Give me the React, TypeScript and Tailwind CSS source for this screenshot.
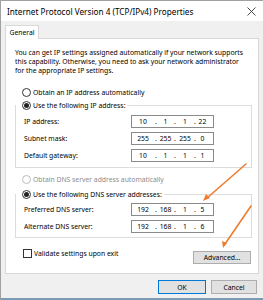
import React from "react";

const font = { fontFamily: '"Noto Sans", "Open Sans", sans-serif' };

function Radio({ checked, disabled }: { checked?: boolean; disabled?: boolean }) {
  return (
    <span
      className={`flex h-[9px] w-[9px] shrink-0 items-center justify-center rounded-full border bg-white ${
        disabled ? "border-[#bcbcbc]" : "border-[#333]"
      }`}
    >
      {checked && <span className="h-[5px] w-[5px] rounded-full bg-[#222]" />}
    </span>
  );
}

function IpField({ parts }: { parts: string[] }) {
  const widths = ["w-[20px]", "w-[13px]", "w-[14px]", "w-[9px]"];
  return (
    <div className="flex h-[13px] w-[83px] items-center border border-[#8a8a8a] bg-white pl-[1px] text-[6.8px] text-black">
      {parts.map((p, i) => (
        <React.Fragment key={i}>
          <span className={`${widths[i]} text-center`}>{p}</span>
          {i < 3 && <span className="w-[6px] text-center">.</span>}
        </React.Fragment>
      ))}
    </div>
  );
}

function FieldRow({ label, parts }: { label: string; parts: string[] }) {
  return (
    <div className="flex h-[17px] items-center">
      <span className="w-[115px] pl-[8px]">{label}</span>
      <IpField parts={parts} />
    </div>
  );
}

export default function App() {
  return (
    <div
      className="relative flex h-[300px] w-[263px] flex-col overflow-hidden whitespace-nowrap border-l border-t border-[#a0a0a0] bg-[#f0f0f0] text-[6.8px] leading-[9px] text-black"
      style={font}
    >
      {/* title bar */}
      <div className="flex h-[20px] shrink-0 items-center justify-between bg-white pl-[6px] pr-[6px]">
        <span className="text-[8.2px]">Internet Protocol Version 4 (TCP/IPv4) Properties</span>
        <svg width="9" height="9" viewBox="0 0 9 9" className="mr-[1px]">
          <path d="M0.5 0.5 L8.5 8.5 M8.5 0.5 L0.5 8.5" stroke="#333" strokeWidth="0.9" />
        </svg>
      </div>

      <div className="flex flex-col px-[4px] pt-[4px]">
        {/* tab */}
        <div className="relative z-10 -mb-px flex h-[14px] w-[34px] items-center justify-center border border-b-0 border-[#d9d9d9] bg-white">
          General
        </div>

        {/* panel */}
        <div className="flex h-[236px] w-[254px] flex-col border border-[#d9d9d9] bg-white pl-[9px] pr-[6px] pt-[9px]">
          <p className="leading-[9px]">
            You can get IP settings assigned automatically if your network supports
            <br />
            this capability. Otherwise, you need to ask your network administrator
            <br />
            for the appropriate IP settings.
          </p>

          <div className="mt-[13px] flex h-[9px] items-center gap-[2px] pl-[7px]">
            <Radio />
            <span>Obtain an IP address automatically</span>
          </div>

          {/* IP group */}
          <div className="mt-[8px] h-[63px] w-[237px] border border-[#dcdcdc]">
            <div className="-mt-[5px] flex h-[9px] w-max items-center gap-[2px] bg-white pl-[6px] pr-[2px]">
              <Radio checked />
              <span>Use the following IP address:</span>
            </div>
            <div className="mt-[3px] flex flex-col">
              <FieldRow label="IP address:" parts={["10", "1", "1", "22"]} />
              <FieldRow label="Subnet mask:" parts={["255", "255", "255", "0"]} />
              <FieldRow label="Default gateway:" parts={["10", "1", "1", "1"]} />
            </div>
          </div>

          <div className="mt-[7px] flex h-[9px] items-center gap-[2px] pl-[7px] text-[#8d8d8d]">
            <Radio disabled />
            <span>Obtain DNS server address automatically</span>
          </div>

          {/* DNS group */}
          <div className="mt-[10px] h-[44px] w-[237px] border border-[#dcdcdc]">
            <div className="-mt-[5px] flex h-[9px] w-max items-center gap-[2px] bg-white pl-[6px] pr-[2px]">
              <Radio checked />
              <span>Use the following DNS server addresses:</span>
            </div>
            <div className="mt-[2px] flex flex-col">
              <FieldRow label="Preferred DNS server:" parts={["192", "168", "1", "5"]} />
              <FieldRow label="Alternate DNS server:" parts={["192", "168", "1", "6"]} />
            </div>
          </div>

          <div className="mt-[11px] flex items-start justify-between pr-[1px]">
            <div className="flex h-[9px] items-center gap-[2px] pl-[8px]">
              <span className="h-[9px] w-[9px] border border-[#333] bg-white" />
              <span>Validate settings upon exit</span>
            </div>
            <button className="mt-[2px] flex h-[13px] w-[58px] items-center justify-center border border-[#adadad] bg-[#e1e1e1]">
              Advanced...
            </button>
          </div>
        </div>

        {/* footer buttons */}
        <div className="mt-[6px] flex justify-end gap-[5px] pr-[2px]">
          <button className="flex h-[14px] w-[48px] items-center justify-center border border-[#0078d7] bg-[#e1e1e1]">
            OK
          </button>
          <button className="flex h-[14px] w-[46px] items-center justify-center border border-[#adadad] bg-[#e1e1e1]">
            Cancel
          </button>
        </div>
      </div>

      <div className="mt-auto h-[2px] bg-[#7a9bb3]" />

      {/* annotation arrows */}
      <svg className="pointer-events-none absolute left-0 top-0" width="263" height="300" viewBox="0 0 263 300">
        <g stroke="#ed7d31" strokeWidth="1.6" fill="#ed7d31" strokeLinecap="round">
          <line x1="245" y1="163" x2="206" y2="197" />
          <polygon points="202,200 205,193 209,197" stroke="none" />
          <line x1="250" y1="205" x2="224" y2="243" />
          <polygon points="222,247 221,240 226,242" stroke="none" />
        </g>
      </svg>
    </div>
  );
}
